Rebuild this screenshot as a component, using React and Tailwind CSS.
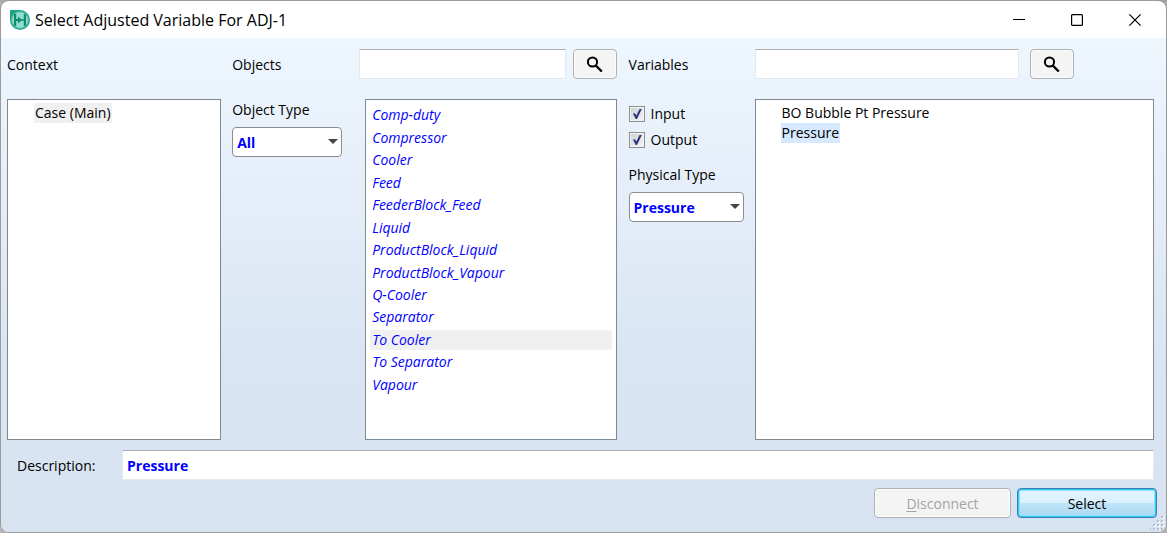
import React, { useState } from "react";

const OBJECTS = [
  "Comp-duty",
  "Compressor",
  "Cooler",
  "Feed",
  "FeederBlock_Feed",
  "Liquid",
  "ProductBlock_Liquid",
  "ProductBlock_Vapour",
  "Q-Cooler",
  "Separator",
  "To Cooler",
  "To Separator",
  "Vapour",
];

const VARIABLES = ["BO Bubble Pt Pressure", "Pressure"];

function AppIcon() {
  return (
    <svg className="size-5 shrink-0" viewBox="0 0 20 20" aria-hidden="true">
      <path d="M0 0H10A10 10 0 1 1 0 10Z" fill="#1fa187" />
      <circle cx="10" cy="10" r="9" fill="#4dbda4" />
      <circle cx="10" cy="10" r="7.8" fill="#8fe0cc" />
      <path d="M4 4H6.200V16H4Z" fill="#128a72" />
      <path d="M13.800 4H16V16H13.800Z" fill="#128a72" />
      <path d="M6 9H8V6.600L12 10L8 13.400V11H6Z" fill="#128a72" />
      <path d="M11 9.300H14V10.700H11Z" fill="#128a72" />
    </svg>
  );
}

function SearchButton({ label }) {
  return (
    <button
      type="button"
      aria-label={label}
      className="flex h-[30px] w-11 shrink-0 items-center justify-center rounded-[4px] border border-[#adb2b5] bg-[#f4f4f4] shadow-[inset_0_0_0_1px_#fcfcfc]"
    >
      <svg className="size-4" viewBox="0 0 16 16" fill="none" stroke="#000" aria-hidden="true">
        <circle cx="5.5" cy="6" r="4.600" strokeWidth="2" />
        <path d="M8.800 9.500L14.800 15.500" strokeWidth="2.400" />
      </svg>
    </button>
  );
}

function TextField({ className, ...props }) {
  return (
    <input
      type="text"
      className={`h-[30px] min-w-0 border border-[#e2e9ef] border-t-[#abadb3] bg-white px-1 outline-none ${className}`}
      {...props}
    />
  );
}

function Dropdown({ id, label, options }) {
  return (
    <div className="flex flex-col gap-[7px]">
      <label htmlFor={id} className="leading-5 whitespace-nowrap">
        {label}
      </label>
      <div className="relative">
        <select
          id={id}
          className="h-[30px] w-full appearance-none rounded-[4px] border border-[#8a8d91] bg-white pt-0.5 pr-5 pl-1 font-bold text-[#0000ff] outline-none"
        >
          {options.map((o) => (
            <option key={o}>{o}</option>
          ))}
        </select>
        <svg
          className="pointer-events-none absolute top-3 right-1 h-[5px] w-[10px]"
          viewBox="0 0 10 5"
          aria-hidden="true"
        >
          <path d="M0 0H10L5 5Z" fill="#444" />
        </svg>
      </div>
    </div>
  );
}

function CheckOption({ label }) {
  return (
    <label className="flex h-5 items-center gap-1.5">
      <span className="relative size-4">
        <input
          type="checkbox"
          defaultChecked
          className="peer block size-4 appearance-none border border-[#8e8f8f] bg-[linear-gradient(135deg,#cbcfd5,#f6f6f6)] shadow-[inset_0_0_0_1px_#f4f4f4]"
        />
        <svg
          className="pointer-events-none absolute inset-0 hidden size-4 peer-checked:block"
          viewBox="0 0 16 16"
          aria-hidden="true"
        >
          <path d="M4 7.500L6 7.200L7.300 9.600L10.600 3H12.800L8 13H6.700Z" fill="#31347c" />
        </svg>
      </span>
      {label}
    </label>
  );
}

export default function App() {
  const [object, setObject] = useState("To Cooler");
  const [variable, setVariable] = useState("Pressure");

  return (
    <div className="flex h-screen min-h-[480px] bg-[#b4b4b4] bg-[linear-gradient(90deg,#a8a8a8_74%,#a89a88_74%,#a89a88_85%,#a0a0a4_85%)] bg-[length:100%_2px] bg-no-repeat p-px font-['Open_Sans','Noto_Sans',sans-serif] text-sm text-black">
      <div className="flex min-w-0 flex-1 flex-col overflow-hidden rounded-[8px] bg-white shadow-[0_0_0_1px_#9b9b9b]">
        <header className="flex h-[37px] shrink-0 items-center">
          <div className="flex min-w-0 flex-1 items-center gap-[5px] pl-[9px]">
            <AppIcon />
            <h1 className="truncate text-base">Select Adjusted Variable For ADJ-1</h1>
          </div>
          <div className="flex h-full shrink-0 pr-0.5">
            <button type="button" aria-label="Minimize" className="flex w-[58px] items-center justify-center">
              <svg className="size-3" viewBox="0 0 12 12" fill="none" stroke="#000" aria-hidden="true">
                <path d="M0 5.500H12" />
              </svg>
            </button>
            <button type="button" aria-label="Maximize" className="flex w-[58px] items-center justify-center">
              <svg className="size-3" viewBox="0 0 12 12" fill="none" stroke="#000" strokeWidth="1.200" aria-hidden="true">
                <rect x="0.600" y="0.600" width="10.800" height="10.800" rx="1" />
              </svg>
            </button>
            <button type="button" aria-label="Close" className="flex w-[58px] items-center justify-center">
              <svg className="size-3" viewBox="0 0 12 12" fill="none" stroke="#000" strokeWidth="1.200" aria-hidden="true">
                <path d="M0.400 0.400L11.600 11.600M11.600 0.400L0.400 11.600" />
              </svg>
            </button>
          </div>
        </header>

        <main className="relative flex min-h-0 flex-1 flex-col bg-[linear-gradient(#eef6fe,#e4edf8_35%,#d9e5f3_65%,#d7e3f1)] pt-[11px] pb-[14px]">
          <div className="grid min-h-0 flex-1 grid-cols-[214fr_384fr_526fr] gap-x-[11px] pr-3 pl-1.5">
            <section className="flex min-h-0 flex-col gap-5">
              <h2 className="flex h-[30px] items-center pt-0.5">Context</h2>
              <ul className="min-h-0 flex-1 border border-[#828790] bg-white pt-[3px] pl-[26px]">
                <li>
                  <button type="button" className="h-5 bg-[#f0f0f0] px-px leading-5">
                    Case (Main)
                  </button>
                </li>
              </ul>
            </section>

            <section className="flex min-h-0 flex-col gap-5">
              <div className="flex items-center gap-[7px]">
                <label htmlFor="objects" className="w-[120px] shrink-0 pt-0.5">
                  Objects
                </label>
                <TextField id="objects" className="flex-1" />
                <SearchButton label="Search objects" />
              </div>
              <div className="flex min-h-0 flex-1 gap-[23px]">
                <div className="w-[110px] shrink-0 pt-px">
                  <Dropdown id="object-type" label="Object Type" options={["All", "Streams", "UnitOps"]} />
                </div>
                <div className="min-w-0 flex-1 border border-[#7b8b9a] bg-white px-1 pt-1">
                  <ul className="flex h-[292px] flex-col">
                    {OBJECTS.map((name) => (
                      <li key={name} className="flex flex-1 items-center">
                        <button
                          type="button"
                          onClick={() => setObject(name)}
                          className={`h-5 w-full rounded-[2px] px-0.5 text-left leading-5 text-[#0000ff] italic ${
                            name === object ? "bg-[#f0f0f0]" : ""
                          }`}
                        >
                          {name}
                        </button>
                      </li>
                    ))}
                  </ul>
                </div>
              </div>
            </section>

            <section className="flex min-h-0 flex-col gap-5 pl-px">
              <div className="flex items-center gap-[11px] pr-20">
                <label htmlFor="variables" className="w-[115px] shrink-0 pt-0.5">
                  Variables
                </label>
                <TextField id="variables" className="flex-1" />
                <SearchButton label="Search variables" />
              </div>
              <div className="flex min-h-0 flex-1 gap-[11px]">
                <div className="flex w-[115px] shrink-0 flex-col pt-[5px]">
                  <div className="mb-[15px] flex flex-col gap-1.5">
                    <CheckOption label="Input" />
                    <CheckOption label="Output" />
                  </div>
                  <Dropdown
                    id="physical-type"
                    label="Physical Type"
                    options={["Pressure", "Temperature", "Flow"]}
                  />
                </div>
                <ul className="min-w-0 flex-1 border border-[#828790] bg-white pt-[3px] pl-[25px]">
                  {VARIABLES.map((name) => (
                    <li key={name} className="h-5">
                      <button
                        type="button"
                        onClick={() => setVariable(name)}
                        className={`h-5 px-px leading-5 ${name === variable ? "bg-[#d6e9ff]" : ""}`}
                      >
                        {name}
                      </button>
                    </li>
                  ))}
                </ul>
              </div>
            </section>
          </div>

          <div className="mt-[10px] flex items-center pr-3 pl-4">
            <label htmlFor="description" className="w-[105px] shrink-0 pt-0.5">
              Description:
            </label>
            <TextField
              id="description"
              readOnly
              value={variable}
              className="flex-1 font-bold text-[#0000ff]"
            />
          </div>

          <div className="mt-2 flex justify-end gap-1.5 pr-[9px]">
            <button
              type="button"
              disabled
              className="h-[30px] w-[137px] rounded-[4px] border border-[#adb2b5] bg-[#f4f4f4] pt-0.5 text-[#a3a3a3] shadow-[inset_0_0_0_1px_#fcfcfc]"
            >
              <span className="underline underline-offset-2">D</span>isconnect
            </button>
            <button
              type="button"
              className="h-[30px] w-[140px] rounded-[4px] border border-[#3c7fb1] bg-[linear-gradient(#e6f5fd,#d9f0fc_50%,#bfe4f8_50%,#a9d9f2)] pt-0.5 shadow-[inset_0_0_0_1px_#2fc8f5,inset_0_0_0_2px_#8fe0fa]"
            >
              Select
            </button>
          </div>

          <svg className="absolute right-0.5 bottom-0.5 size-[14px]" viewBox="0 0 14 14" aria-hidden="true">
            <path
              d="M12 1h2v2h-2zM12 5h2v2h-2zM8 5h2v2h-2zM12 9h2v2h-2zM8 9h2v2h-2zM4 9h2v2h-2zM12 13h2v1h-2zM8 13h2v1h-2zM4 13h2v1h-2z"
              fill="#fff"
            />
            <path
              d="M11 0h2v2h-2zM11 4h2v2h-2zM7 4h2v2h-2zM11 8h2v2h-2zM7 8h2v2h-2zM3 8h2v2h-2zM11 12h2v2h-2zM7 12h2v2h-2zM3 12h2v2h-2zM0 12h1v2h-1z"
              fill="#b3bfd0"
            />
          </svg>
        </main>
      </div>
    </div>
  );
}
